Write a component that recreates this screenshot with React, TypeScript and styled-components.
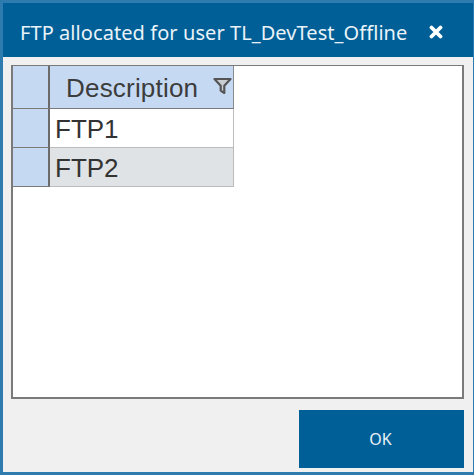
import React from "react"
import styled, { createGlobalStyle } from "styled-components"

const GlobalStyle = createGlobalStyle`
  html, body {
    margin: 0;
    padding: 0;
    background: #f0f0f0;
  }
`

const Dialog = styled.div`
  box-sizing: border-box;
  width: 474px;
  height: 475px;
  display: flex;
  flex-direction: column;
  border: 3px solid #2e7bb0;
  border-right-width: 1px;
  border-bottom-width: 3px;
  background: #f0f0f0;
`

const TitleBar = styled.div`
  height: 54px;
  flex: none;
  display: flex;
  align-items: center;
  justify-content: space-between;
  box-sizing: border-box;
  padding: 4px 30px 0 17px;
  background: #005f96;
  color: #eaf3f9;
  font: 20px "Noto Sans", sans-serif;
  letter-spacing: 0.07px;
`

const CloseButton = styled.svg`
  width: 14px;
  height: 14px;
  display: block;
`

const Body = styled.div`
  flex: 1;
  display: flex;
  flex-direction: column;
  padding: 8px 9px 4px 8px;
  min-height: 0;
`

const GridBox = styled.div`
  box-sizing: border-box;
  height: 334px;
  flex: none;
  background: #fff;
  border: 1px solid #7a7a7a;
  border-width: 1px 2px 2px 2px;
`

const Row = styled.div<{ $height: number }>`
  display: flex;
  width: 221px;
  height: ${(p) => p.$height}px;
  box-sizing: border-box;
`

const RowHeader = styled.div`
  box-sizing: border-box;
  width: 37px;
  flex: none;
  background: #c5d9f3;
  border-right: 2px solid #6b6b6b;
  border-bottom: 1px solid #7a7a7a;
`

const HeaderCell = styled.div`
  position: relative;
  flex: 1;
  box-sizing: border-box;
  padding: 3px 0 0 16px;
  background: #c5d9f3;
  border-right: 1px solid #8a8a8a;
  border-bottom: 1px solid #7a7a7a;
  color: #3c3c3c;
  font: 26px/38px "Liberation Sans", Arial, sans-serif;
  letter-spacing: 0.2px;
`

const FilterIcon = styled.svg`
  position: absolute;
  top: 11px;
  right: 1px;
  width: 19px;
  height: 18px;
`

const Cell = styled.div<{ $alt?: boolean }>`
  flex: 1;
  box-sizing: border-box;
  padding-left: 5px;
  background: ${(p) => (p.$alt ? "#dfe3e6" : "#fff")};
  border-right: 1px solid #bcbcbc;
  border-bottom: 1px solid #bcbcbc;
  color: #333;
  font: 26px/40px "Liberation Sans", Arial, sans-serif;
`

const Footer = styled.div`
  flex: 1;
  display: flex;
  justify-content: flex-end;
  align-items: flex-end;
`

const OkButton = styled.button`
  width: 165px;
  height: 58px;
  border: none;
  background: #005f96;
  color: #eaf3f9;
  font: 16px "Noto Sans", sans-serif;
  padding: 0 2px 0 0;
`

const rows = [
  { name: "FTP1", alt: false },
  { name: "FTP2", alt: true },
]

const App = () => {
  return (
    <>
      <GlobalStyle />
      <Dialog>
        <TitleBar>
          <span>FTP allocated for user TL_DevTest_Offline</span>
          <CloseButton viewBox="0 0 14 14">
            <path d="M2.5 2.5 L11.5 11.5 M11.5 2.5 L2.5 11.5" stroke="#fff" strokeWidth="3.8" strokeLinecap="round" />
          </CloseButton>
        </TitleBar>
        <Body>
          <GridBox>
            <Row $height={43}>
              <RowHeader />
              <HeaderCell>
                Description
                <FilterIcon viewBox="0 0 19 18">
                  <path d="M1.5 2 H17.5 L11.3 8.8 V16 L7.7 13.6 V8.8 Z" fill="#c9ccd1" stroke="#555" strokeWidth="2.2" strokeLinejoin="round" />
                </FilterIcon>
              </HeaderCell>
            </Row>
            {rows.map((row) => (
              <Row $height={39} key={row.name}>
                <RowHeader />
                <Cell $alt={row.alt}>{row.name}</Cell>
              </Row>
            ))}
          </GridBox>
          <Footer>
            <OkButton>OK</OkButton>
          </Footer>
        </Body>
      </Dialog>
    </>
  )
}

export default App
